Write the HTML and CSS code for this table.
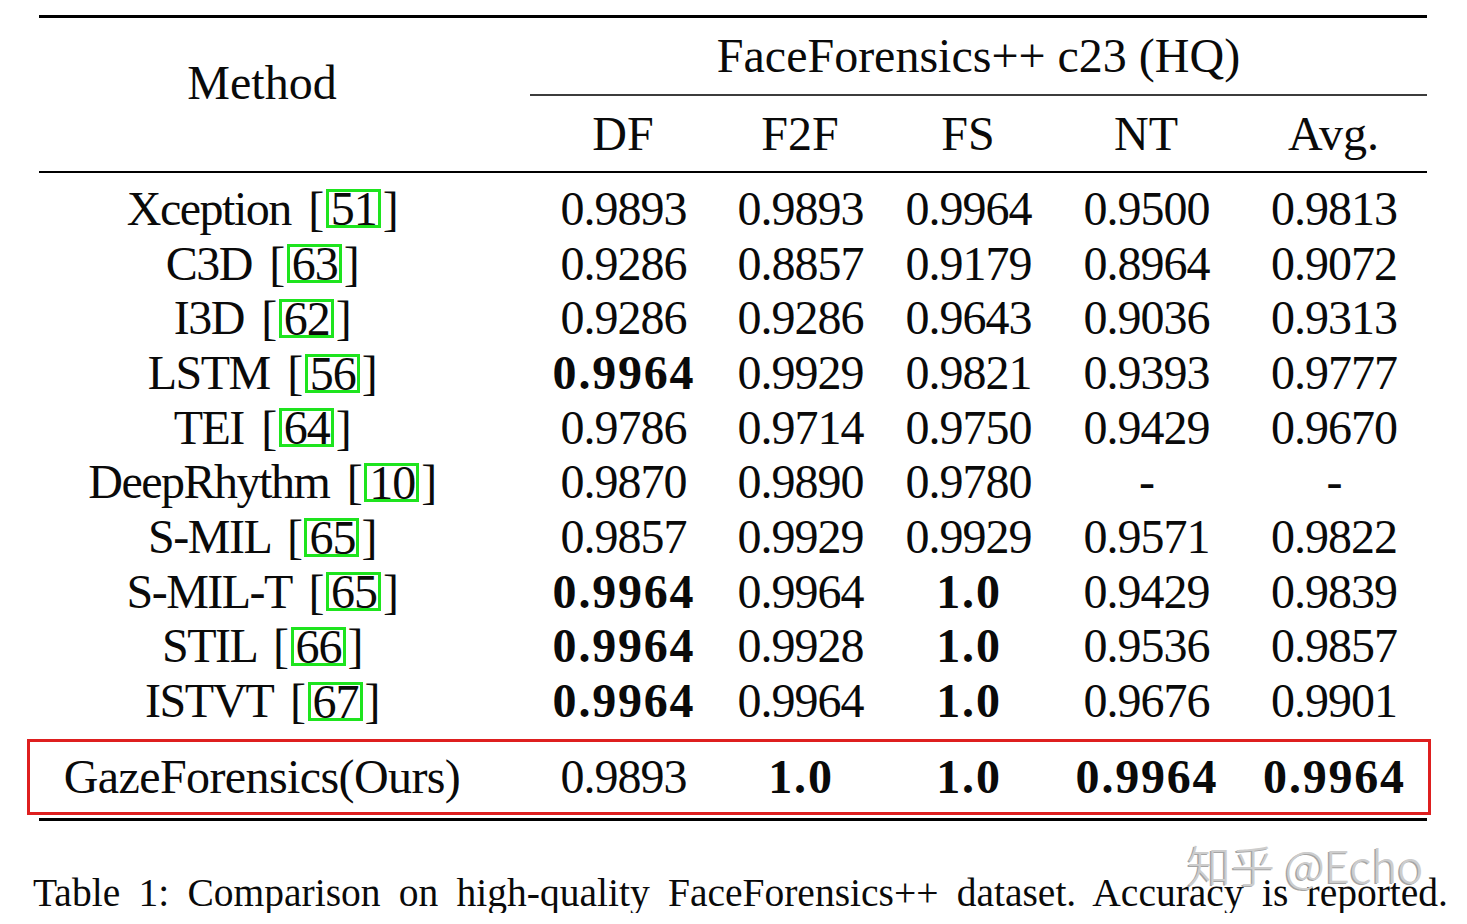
FILE: index.html
```html
<!DOCTYPE html>
<html lang="en">
<head>
<meta charset="utf-8">
<title>Table 1</title>
<link rel="stylesheet" href="styles.css">
</head>
<body>
<div class="page">
  <div class="rule rule-top"></div>
  <div class="head">
    <div class="cell method-head">Method</div>
    <div class="cell group-head">FaceForensics++ c23 (HQ)</div>
    <div class="cmidrule"></div>
    <div class="cell sub">DF</div>
    <div class="cell sub">F2F</div>
    <div class="cell sub">FS</div>
    <div class="cell sub">NT</div>
    <div class="cell sub">Avg.</div>
  </div>
  <div class="rule rule-mid"></div>
  <div class="body">
    <div class="row"><div class="cell name">Xception [<span class="cite">51</span>]</div><div class="cell num">0.9893</div><div class="cell num">0.9893</div><div class="cell num">0.9964</div><div class="cell num">0.9500</div><div class="cell num">0.9813</div></div>
    <div class="row"><div class="cell name">C3D [<span class="cite">63</span>]</div><div class="cell num">0.9286</div><div class="cell num">0.8857</div><div class="cell num">0.9179</div><div class="cell num">0.8964</div><div class="cell num">0.9072</div></div>
    <div class="row"><div class="cell name">I3D [<span class="cite">62</span>]</div><div class="cell num">0.9286</div><div class="cell num">0.9286</div><div class="cell num">0.9643</div><div class="cell num">0.9036</div><div class="cell num">0.9313</div></div>
    <div class="row"><div class="cell name">LSTM [<span class="cite">56</span>]</div><div class="cell num bold">0.9964</div><div class="cell num">0.9929</div><div class="cell num">0.9821</div><div class="cell num">0.9393</div><div class="cell num">0.9777</div></div>
    <div class="row"><div class="cell name">TEI [<span class="cite">64</span>]</div><div class="cell num">0.9786</div><div class="cell num">0.9714</div><div class="cell num">0.9750</div><div class="cell num">0.9429</div><div class="cell num">0.9670</div></div>
    <div class="row"><div class="cell name">DeepRhythm [<span class="cite">10</span>]</div><div class="cell num">0.9870</div><div class="cell num">0.9890</div><div class="cell num">0.9780</div><div class="cell num">-</div><div class="cell num">-</div></div>
    <div class="row"><div class="cell name">S-MIL [<span class="cite">65</span>]</div><div class="cell num">0.9857</div><div class="cell num">0.9929</div><div class="cell num">0.9929</div><div class="cell num">0.9571</div><div class="cell num">0.9822</div></div>
    <div class="row"><div class="cell name">S-MIL-T [<span class="cite">65</span>]</div><div class="cell num bold">0.9964</div><div class="cell num">0.9964</div><div class="cell num bold">1.0</div><div class="cell num">0.9429</div><div class="cell num">0.9839</div></div>
    <div class="row"><div class="cell name">STIL [<span class="cite">66</span>]</div><div class="cell num bold">0.9964</div><div class="cell num">0.9928</div><div class="cell num bold">1.0</div><div class="cell num">0.9536</div><div class="cell num">0.9857</div></div>
    <div class="row"><div class="cell name">ISTVT [<span class="cite">67</span>]</div><div class="cell num bold">0.9964</div><div class="cell num">0.9964</div><div class="cell num bold">1.0</div><div class="cell num">0.9676</div><div class="cell num">0.9901</div></div>
  </div>
  <div class="row ours"><div class="cell name">GazeForensics(Ours)</div><div class="cell num">0.9893</div><div class="cell num bold">1.0</div><div class="cell num bold">1.0</div><div class="cell num bold">0.9964</div><div class="cell num bold">0.9964</div></div>
  <div class="rule rule-bottom"></div>
  <p class="caption">Table 1: Comparison on high-quality FaceForensics++ dataset. Accuracy is reported.</p>
  <div class="watermark">知乎 @Echo</div>
</div>
</body>
</html>
```

FILE: styles.css
```css
html, body {
  margin: 0;
  padding: 0;
  background: #ffffff;
  overflow: hidden;
}

.page {
  position: relative;
  width: 1388px;
  padding: 15px 0 0 39px;
  box-sizing: content-box;
  font-family: "Liberation Serif", "Times New Roman", serif;
  color: #0a0a0a;
  font-size: 48px;
}

.rule {
  background: #000000;
}
.rule-top {
  height: 3px;
}
.rule-mid {
  height: 2px;
}
.rule-bottom {
  height: 3px;
  margin-top: 3px;
}

.head,
.row {
  display: grid;
  grid-template-columns: 491px 186px 168px 168px 188px 187px;
}

.head {
  grid-template-rows: 76px 2px 75px;
}

.cell {
  display: flex;
  align-items: center;
  justify-content: center;
  white-space: nowrap;
}

.method-head {
  grid-column: 1;
  grid-row: 1 / span 3;
  align-items: flex-start;
  padding: 37px 45px 0 0;
  line-height: 56px;
}

.group-head {
  grid-column: 2 / span 5;
  grid-row: 1;
  line-height: 76px;
}

.cmidrule {
  grid-column: 2 / span 5;
  grid-row: 2;
  background: #3c3c3c;
}

.sub {
  grid-row: 3;
  line-height: 75px;
}

.body {
  padding-top: 8.6px;
}

.body .row {
  height: 54.7px;
}

.name {
  padding-right: 45px;
  line-height: 54px;
  letter-spacing: -1.5px;
  word-spacing: 7px;
}

.num {
  line-height: 54px;
  letter-spacing: -1px;
  padding-left: 1px;
}

.num.bold {
  font-weight: 700;
  letter-spacing: 1.8px;
  padding-left: 2px;
}

.cite {
  display: inline-block;
  border: 3px solid #1ee41e;
  line-height: 33px;
  height: 33px;
  padding: 0 1px 0 2px;
  margin: 0 2px 0 3px;
  letter-spacing: -1px;
}

.ours {
  margin: 10.4px -4px 0 -12px;
  border: 3px solid #de1f1f;
  padding: 0 1px 0 9px;
  height: 70px;
}

.ours .cell {
  line-height: 70px;
}

.ours .name {
  letter-spacing: -0.6px;
}

.caption {
  width: 1415px;
  margin: 52px 0 0 -6px;
  font-size: 39.5px;
  line-height: 40px;
  text-align: justify;
  text-align-last: justify;
  color: #0a0a0a;
}

.watermark {
  position: absolute;
  left: 1187px;
  top: 842px;
  font-family: "Noto Sans CJK SC", "Noto Sans", sans-serif;
  font-weight: 300;
  font-size: 44px;
  line-height: 44px;
  color: #cdcdcd;
  text-shadow: -1.5px 0.5px 0 #a4a4a4;
  white-space: nowrap;
}
```
